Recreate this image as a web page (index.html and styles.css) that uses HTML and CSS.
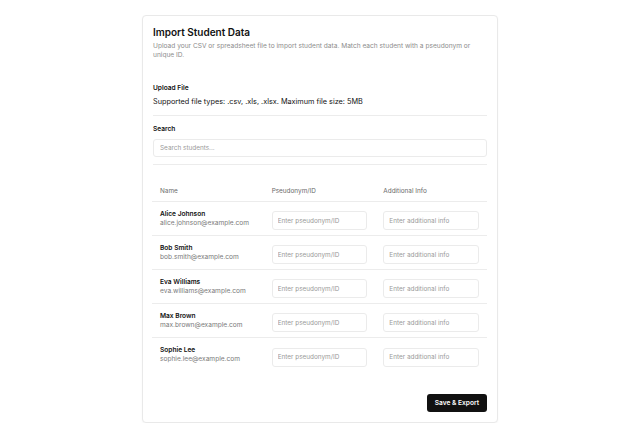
FILE: index.html
```html
<!DOCTYPE html>
<html>
  <head>
    <meta charset="UTF-8">
    <title>Import Student Data</title>
    <link rel="stylesheet" href="styles.css">
  </head>
  <body>
    <div class="page">
      <div class="card">
        <h1>Import Student Data</h1>
        <p class="desc">Upload your CSV or spreadsheet file to import student data. Match each student with a pseudonym or unique ID.</p>

        <div class="section upload">
          <div class="label">Upload File</div>
          <div class="hint">Supported file types: .csv, .xls, .xlsx. Maximum file size: 5MB</div>
        </div>

        <div class="section search">
          <div class="label">Search</div>
          <input class="field search-field" type="text" placeholder="Search students...">
        </div>

        <table class="students">
          <thead>
            <tr>
              <th>Name</th>
              <th>Pseudonym/ID</th>
              <th>Additional Info</th>
            </tr>
          </thead>
          <tbody>
            <tr>
              <td><div class="name">Alice Johnson</div><div class="email">alice.johnson@example.com</div></td>
              <td><input class="field" type="text" placeholder="Enter pseudonym/ID"></td>
              <td><input class="field" type="text" placeholder="Enter additional info"></td>
            </tr>
            <tr>
              <td><div class="name">Bob Smith</div><div class="email">bob.smith@example.com</div></td>
              <td><input class="field" type="text" placeholder="Enter pseudonym/ID"></td>
              <td><input class="field" type="text" placeholder="Enter additional info"></td>
            </tr>
            <tr>
              <td><div class="name">Eva Williams</div><div class="email">eva.williams@example.com</div></td>
              <td><input class="field" type="text" placeholder="Enter pseudonym/ID"></td>
              <td><input class="field" type="text" placeholder="Enter additional info"></td>
            </tr>
            <tr>
              <td><div class="name">Max Brown</div><div class="email">max.brown@example.com</div></td>
              <td><input class="field" type="text" placeholder="Enter pseudonym/ID"></td>
              <td><input class="field" type="text" placeholder="Enter additional info"></td>
            </tr>
            <tr>
              <td><div class="name">Sophie Lee</div><div class="email">sophie.lee@example.com</div></td>
              <td><input class="field" type="text" placeholder="Enter pseudonym/ID"></td>
              <td><input class="field" type="text" placeholder="Enter additional info"></td>
            </tr>
          </tbody>
        </table>

        <div class="actions">
          <button class="btn">Save &amp; Export</button>
        </div>
      </div>
    </div>
  </body>
</html>
```

FILE: styles.css
```css
* { box-sizing: border-box }
body { background: #fff; color: #111; font-family: Inter, "Noto Sans", sans-serif; margin: 0 }
h1 { font-size: 10px; font-weight: 600; line-height: 12px; margin: 0 }
p { margin: 0 }

.page { display: flex; justify-content: center; padding-top: 15px }
.card { background: #fff; border: 1px solid #e9e9e9; border-radius: 4px; box-shadow: 0 1px 2px rgba(0, 0, 0, 0.04); padding: 10px; width: 356px }
.desc { color: #8c8c8c; font-size: 6.6px; line-height: 9.3px; margin-top: 4px }

.section { display: flex; flex-direction: column }
.label { font-size: 6.6px; font-weight: 600; line-height: 10px }
.upload { border-bottom: 1px solid #ececec; gap: 4px; margin-top: 22px; padding-bottom: 8px }
.hint { font-size: 7.3px; line-height: 10px }
.search { border-bottom: 1px solid #ececec; gap: 5px; margin-top: 8px; padding-bottom: 7px }

.field { background: #fff; border: 1px solid #ebebeb; border-radius: 3px; color: #111; font-family: inherit; font-size: 6.4px; height: 19px; outline: none; padding: 0 5px; width: 100% }
.field::placeholder { color: #9a9a9a }
.search-field { height: 18px; padding: 0 6px }

.students { border-collapse: collapse; margin-left: -1px; margin-top: 15px; table-layout: fixed; width: 335px }
.students th { border-bottom: 1px solid #ececec; color: #6b6b6b; font-size: 6.4px; font-weight: 400; height: 22px; padding: 2px 8px 0; text-align: left }
.students td { border-bottom: 1px solid #ececec; height: 34px; padding: 0 8px; vertical-align: middle }
.students tbody tr:last-child td { border-bottom: none }
.name { font-size: 6.6px; font-weight: 600; line-height: 9px }
.email { color: #7a7a7a; font-size: 6.6px; line-height: 9px }

.actions { display: flex; justify-content: flex-end; margin-top: 22px }
.btn { background: #111; border: none; border-radius: 3px; color: #fff; font-family: inherit; font-size: 6.6px; font-weight: 600; height: 18px; padding: 0 8px }
```
